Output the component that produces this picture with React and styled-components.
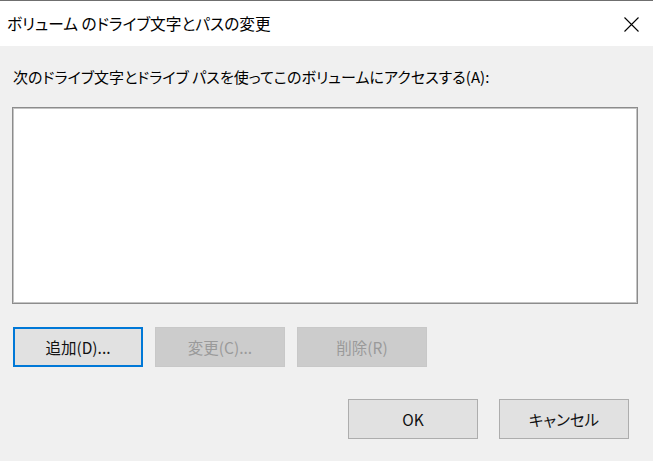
import React from "react";
import styled, { createGlobalStyle } from "styled-components";

const Global = createGlobalStyle`
  html, body { margin: 0; padding: 0; background: #f0f0f0; }
  body { font-family: "Noto Sans CJK JP", "Noto Sans", sans-serif; }
  * { box-sizing: border-box; }
`;

const Window = styled.div`
  width: 653px;
  height: 461px;
  background: #f0f0f0;
  border-top: 1px solid #6f6f6f;
  display: flex;
  flex-direction: column;
  overflow: hidden;
`;

const TitleBar = styled.div`
  height: 45px;
  background: #ffffff;
  display: flex;
  align-items: center;
  justify-content: space-between;
  padding: 0 14px 0 7px;
`;

const Title = styled.div`
  font-size: 15.7px;
  color: #000;
  font-feature-settings: "palt";
`;

const CloseBtn = styled.svg`
  width: 15px;
  height: 15px;
  margin-top: 2px;
`;

const Body = styled.div`
  display: flex;
  flex-direction: column;
  padding: 0 15px 0 12px;
`;

const Label = styled.div`
  margin-top: 21px;
  padding-left: 1px;
  height: 20px;
  line-height: 20px;
  font-size: 15px;
  color: #000;
  font-feature-settings: "palt";
  letter-spacing: 0.05px;
  white-space: nowrap;
`;

const ListBox = styled.div`
  margin-top: 20px;
  height: 197px;
  background: #fff;
  border: 1px solid #8c8c8c;
  box-shadow: inset 0 0 0 1px #c4c4c4;
`;

const Row = styled.div`
  display: flex;
  gap: ${(p) => p.$gap}px;
  margin-top: ${(p) => p.$top}px;
  justify-content: ${(p) => (p.$end ? "flex-end" : "flex-start")};
  padding-left: 1px;
  padding-right: ${(p) => (p.$end ? 9 : 0)}px;
`;

const Button = styled.div`
  width: 130px;
  height: 40px;
  display: flex;
  align-items: center;
  justify-content: center;
  font-size: 15.5px;
  font-feature-settings: "palt";
  background: ${(p) => (p.$disabled ? "#cccccc" : "#e1e1e1")};
  color: ${(p) => (p.$disabled ? "#9a9a9a" : "#111")};
  border: ${(p) =>
    p.$default ? "2px solid #0078d7" : p.$disabled ? "1px solid #c8c8c8" : "1px solid #adadad"};
`;

export default function App() {
  return (
    <>
      <Global />
      <Window>
        <TitleBar>
          <Title>ボリューム のドライブ文字とパスの変更</Title>
          <CloseBtn viewBox="0 0 15 15">
            <path d="M0.5 0.5 L14.5 14.5 M14.5 0.5 L0.5 14.5" stroke="#000" strokeWidth="1.1" fill="none" />
          </CloseBtn>
        </TitleBar>
        <Body>
          <Label>次のドライブ文字とドライブ パスを使ってこのボリュームにアクセスする(A):</Label>
          <ListBox />
          <Row $gap={12} $top={23}>
            <Button $default>追加(D)...</Button>
            <Button $disabled>変更(C)...</Button>
            <Button $disabled>削除(R)</Button>
          </Row>
          <Row $gap={21} $top={32} $end>
            <Button>OK</Button>
            <Button>キャンセル</Button>
          </Row>
        </Body>
      </Window>
    </>
  );
}
